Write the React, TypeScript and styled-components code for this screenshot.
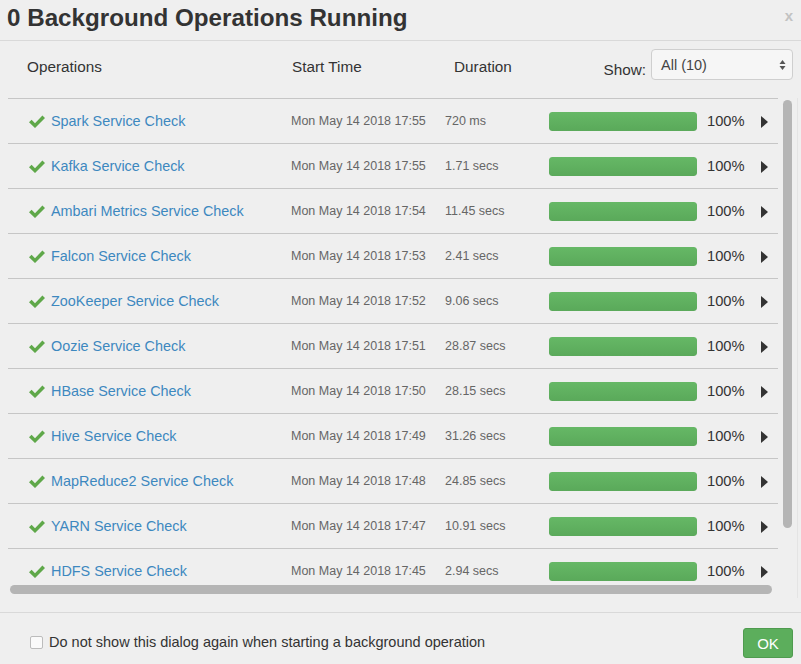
import * as React from "react";
import styled, {createGlobalStyle} from "styled-components";

const GlobalStyle = createGlobalStyle`
    html, body {
        margin: 0;
        padding: 0;
        background: #efefef;
    }
    body {
        font-family: "Liberation Sans", Arial, Helvetica, sans-serif;
        color: #333;
    }
`;

interface Operation {
    name: string;
    start: string;
    duration: string;
}

const operations: Operation[] = [
    {name: "Spark Service Check", start: "Mon May 14 2018 17:55", duration: "720 ms"},
    {name: "Kafka Service Check", start: "Mon May 14 2018 17:55", duration: "1.71 secs"},
    {name: "Ambari Metrics Service Check", start: "Mon May 14 2018 17:54", duration: "11.45 secs"},
    {name: "Falcon Service Check", start: "Mon May 14 2018 17:53", duration: "2.41 secs"},
    {name: "ZooKeeper Service Check", start: "Mon May 14 2018 17:52", duration: "9.06 secs"},
    {name: "Oozie Service Check", start: "Mon May 14 2018 17:51", duration: "28.87 secs"},
    {name: "HBase Service Check", start: "Mon May 14 2018 17:50", duration: "28.15 secs"},
    {name: "Hive Service Check", start: "Mon May 14 2018 17:49", duration: "31.26 secs"},
    {name: "MapReduce2 Service Check", start: "Mon May 14 2018 17:48", duration: "24.85 secs"},
    {name: "YARN Service Check", start: "Mon May 14 2018 17:47", duration: "10.91 secs"},
    {name: "HDFS Service Check", start: "Mon May 14 2018 17:45", duration: "2.94 secs"},
];

const Modal = styled.div`
    width: 801px;
    height: 664px;
    display: flex;
    flex-direction: column;
    overflow: hidden;
    background: #efefef;
`;

const Header = styled.div`
    height: 41px;
    flex: none;
    display: flex;
    align-items: center;
    justify-content: space-between;
    padding: 0 8px 0 7px;
    border-bottom: 1px solid #d9d9d9;
    box-sizing: border-box;
`;

const Title = styled.h1`
    margin: 0;
    margin-top: -5px;
    font-size: 24.2px;
    font-weight: bold;
    color: #333;
`;

const Close = styled.span`
    font-size: 15px;
    font-weight: bold;
    color: #c2c2c2;
    margin-top: -9px;
`;

const Body = styled.div`
    height: 572px;
    flex: none;
    box-sizing: border-box;
    padding: 0 8px 0 8px;
    display: flex;
    flex-direction: column;
    border-bottom: 1px solid #d9d9d9;
`;

const HeadRow = styled.div`
    height: 57px;
    flex: none;
    display: grid;
    grid-template-columns: 265px 162px 140px 1fr;
    align-items: center;
    font-size: 15.3px;
    color: #333;
    padding-left: 19px;
`;

const HeadLabel = styled.span`
    margin-top: -5px;
`;

const ShowBox = styled.div`
    display: flex;
    align-items: center;
    justify-content: flex-end;
    gap: 5px;
`;

const ShowLabel = styled.span`
    margin-top: 0;
`;

const Select = styled.div`
    width: 142px;
    height: 31px;
    box-sizing: border-box;
    border: 1px solid #cfcfcf;
    border-radius: 4px;
    background: #f6f6f6;
    display: flex;
    align-items: center;
    justify-content: space-between;
    padding: 0 6px 0 9px;
    font-size: 14.5px;
    color: #444;
    margin-top: -10px;
`;

const ListFrame = styled.div`
    display: flex;
    flex-direction: column;
    height: 500px;
    width: 789px;
    border-right: 1px solid #e4e4e4;
`;

const ListMain = styled.div`
    display: flex;
    height: 487px;
`;

const Viewport = styled.div`
    width: 770px;
    overflow: hidden;
    border-top: 1px solid #c6c6c6;
`;

const VTrack = styled.div`
    flex: 1;
    padding: 2px 5px 0 5px;
`;

const VThumb = styled.div`
    height: 428px;
    border-radius: 5px;
    background: #b5b5b5;
`;

const HTrack = styled.div`
    padding: 0 25px 0 2px;
`;

const HThumb = styled.div`
    height: 9px;
    border-radius: 5px;
    background: #b5b5b5;
`;

const Row = styled.div`
    height: 45px;
    box-sizing: border-box;
    border-bottom: 1px solid #c6c6c6;
    display: grid;
    grid-template-columns: 283px 154px 104px 158px 54px 1fr;
    align-items: center;
    flex: none;
`;

const NameCell = styled.div`
    display: flex;
    align-items: center;
    gap: 5px;
    padding-left: 20px;
    font-size: 14.4px;
    color: #3d88bf;
    white-space: nowrap;
`;

const SmallCell = styled.div`
    font-size: 12.5px;
    color: #666;
    white-space: nowrap;
`;

const BarCell = styled.div`
    display: flex;
    align-items: center;
`;

const Bar = styled.div<{ $pct: number }>`
    width: 148px;
    height: 19px;
    border-radius: 3px;
    background: #e0e0e0;
    overflow: hidden;
    &::before {
        content: "";
        display: block;
        height: 100%;
        width: ${p => p.$pct}%;
        background: linear-gradient(#66b866, #5aa95a);
        border-radius: 3px;
    }
`;

const Pct = styled.div`
    font-size: 14.7px;
    color: #333;
`;

const Arrow = styled.div`
    width: 0;
    height: 0;
    border-top: 6px solid transparent;
    border-bottom: 6px solid transparent;
    border-left: 7px solid #333;
    margin-top: 2px;
`;

const Footer = styled.div`
    flex: 1;
    display: flex;
    align-items: center;
    justify-content: space-between;
    padding: 7px 8px 0 30px;
`;

const CheckLabel = styled.label`
    display: flex;
    align-items: center;
    gap: 6px;
    font-size: 14.5px;
    color: #333;
`;

const CheckBox = styled.span`
    width: 11px;
    height: 11px;
    border: 1px solid #bcbcbc;
    border-radius: 2px;
    background: #fafafa;
`;

const OkButton = styled.button`
    width: 50px;
    height: 30px;
    border: 1px solid #4f9b4f;
    border-radius: 3px;
    background: #5cae5c;
    color: #fff;
    font-family: inherit;
    font-size: 15px;
    padding: 0;
    margin-top: 2px;
`;

const CheckIcon = () => (
    <svg width="18" height="15" viewBox="0 0 18 15">
        <path d="M1 8.2 L3.6 5.8 L7 9.2 L14.4 1.5 L17 4 L7 14 Z" fill="#5fa84a"/>
    </svg>
);

const SelectArrows = () => (
    <svg width="7" height="12" viewBox="0 0 7 12">
        <path d="M3.5 1 L6.5 5 L0.5 5 Z" fill="#555"/>
        <path d="M3.5 11 L6.5 7 L0.5 7 Z" fill="#555"/>
    </svg>
);

export default function App() {
    return (
        <Modal>
            <GlobalStyle/>
            <Header>
                <Title>0 Background Operations Running</Title>
                <Close>x</Close>
            </Header>
            <Body>
                <HeadRow>
                    <HeadLabel>Operations</HeadLabel>
                    <HeadLabel>Start Time</HeadLabel>
                    <HeadLabel>Duration</HeadLabel>
                    <ShowBox>
                        <ShowLabel>Show:</ShowLabel>
                        <Select>
                            <span>All (10)</span>
                            <SelectArrows/>
                        </Select>
                    </ShowBox>
                </HeadRow>
                <ListFrame>
                    <ListMain>
                        <Viewport>
                            {operations.map(op => (
                                <Row key={op.name}>
                                    <NameCell><CheckIcon/>{op.name}</NameCell>
                                    <SmallCell>{op.start}</SmallCell>
                                    <SmallCell>{op.duration}</SmallCell>
                                    <BarCell><Bar $pct={100}/></BarCell>
                                    <Pct>100%</Pct>
                                    <Arrow/>
                                </Row>
                            ))}
                        </Viewport>
                        <VTrack><VThumb/></VTrack>
                    </ListMain>
                    <HTrack><HThumb/></HTrack>
                </ListFrame>
            </Body>
            <Footer>
                <CheckLabel><CheckBox/>Do not show this dialog again when starting a background operation</CheckLabel>
                <OkButton>OK</OkButton>
            </Footer>
        </Modal>
    );
}
